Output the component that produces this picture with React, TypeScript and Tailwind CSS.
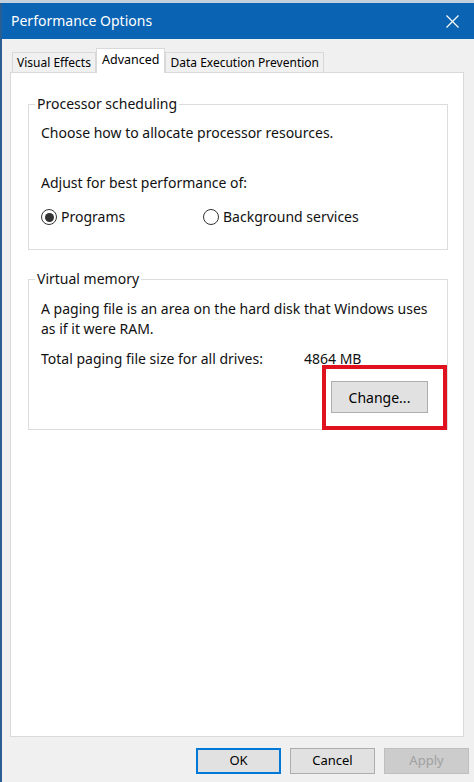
import { type ReactNode } from "react"

const font = { fontFamily: '"Noto Sans", "Segoe UI", sans-serif' }

type TabProps = { label: string; active?: boolean }

const Tab = ({ label, active }: TabProps) =>
  active ? (
    <div className="relative z-10 -mb-px flex h-[25px] items-start border border-b-0 border-[#d9d9d9] bg-white px-[5px] pt-[2px] text-[12.5px] leading-[18px] text-black">
      {label}
    </div>
  ) : (
    <div className="flex h-[20px] items-center border border-b-0 border-[#d9d9d9] bg-[#f0f0f0] px-[4px] text-[12px] leading-[18px] text-black">
      {label}
    </div>
  )

const Radio = ({ checked, label }: { checked?: boolean; label: string }) => (
  <div className="flex items-center gap-[4px]">
    <span className="flex h-[16px] w-[16px] items-center justify-center rounded-full border border-[#333] bg-white">
      {checked && <span className="h-[9px] w-[9px] rounded-full bg-[#333]" />}
    </span>
    <span>{label}</span>
  </div>
)

const GroupBox = ({ title, children, className }: { title: string; children: ReactNode; className?: string }) => (
  <fieldset className={`border border-[#dcdcdc] px-[6px] ${className ?? ""}`}>
    <legend className="px-[2px] leading-[20px]">{title}</legend>
    <div className="px-[6px]">{children}</div>
  </fieldset>
)

const DialogButton = ({ label, primary, disabled }: { label: string; primary?: boolean; disabled?: boolean }) => (
  <button
    className={`h-[26px] w-[85px] text-[13px] ${
      primary
        ? "border-2 border-[#0078d7] bg-[#e1e1e1] text-black"
        : disabled
          ? "border border-[#bfbfbf] bg-[#cccccc] text-[#a0a0a0]"
          : "border border-[#adadad] bg-[#e1e1e1] text-black"
    }`}
  >
    {label}
  </button>
)

export default function App() {
  return (
    <div style={font} className="relative h-[782px] w-[474px] overflow-hidden bg-[#f0f0f0] text-[14px] text-[#111]">
      <div className="h-[3px] bg-[#c3d1de]" />
      <div className="flex h-[779px]">
        <div className="w-[2px] bg-[#2a5f93]" />
        <div className="flex flex-1 flex-col">
          {/* Title bar */}
          <div className="flex h-[36px] items-center justify-between bg-[#0a63b3] pl-[9px] pr-[15px] text-white">
            <span className="text-[14px] leading-[20px]">Performance Options</span>
            <svg width="13" height="13" viewBox="0 0 13 13" className="text-white">
              <path d="M0.5 0.5 L12.5 12.5 M12.5 0.5 L0.5 12.5" stroke="currentColor" strokeWidth="1.2" />
            </svg>
          </div>

          {/* Tabs */}
          <div className="flex items-end pl-[10px] pt-[9px]">
            <Tab label="Visual Effects" />
            <Tab label="Advanced" active />
            <Tab label="Data Execution Prevention" />
          </div>

          {/* Tab panel */}
          <div className="ml-[8px] flex h-[665px] w-[454px] flex-col border border-[#d9d9d9] bg-white pl-[17px] pr-[15px]">
            <GroupBox title="Processor scheduling" className="mt-[21px] pb-[22px]">
              <p className="mt-[9px] leading-[20px]">Choose how to allocate processor resources.</p>
              <p className="mt-[30px] leading-[20px]">Adjust for best performance of:</p>
              <div className="mt-[14px] flex leading-[20px]">
                <div className="w-[162px]">
                  <Radio checked label="Programs" />
                </div>
                <Radio label="Background services" />
              </div>
            </GroupBox>

            <GroupBox title="Virtual memory" className="mt-[19px] pb-[16px]">
              <p className="mt-[10px] whitespace-nowrap leading-[20px]">
                A paging file is an area on the hard disk that Windows uses
                <br />
                as if it were RAM.
              </p>
              <div className="mt-[10px] flex leading-[20px]">
                <span className="w-[263px]">Total paging file size for all drives:</span>
                <span>4864 MB</span>
              </div>
              <div className="mt-[12px] flex justify-end pr-[7px]">
                <button className="h-[32px] w-[97px] border border-[#adadad] bg-[#e1e1e1] text-[14px] text-black">
                  Change...
                </button>
              </div>
            </GroupBox>
          </div>

          {/* Dialog buttons */}
          <div className="mt-[11px] flex justify-end gap-[9px] pr-[5px]">
            <DialogButton label="OK" primary />
            <DialogButton label="Cancel" />
            <DialogButton label="Apply" disabled />
          </div>
        </div>
      </div>

      {/* Red highlight annotation */}
      <div className="absolute left-[322px] top-[365px] h-[65px] w-[125px] border-4 border-[#e0121f]" />
    </div>
  )
}
